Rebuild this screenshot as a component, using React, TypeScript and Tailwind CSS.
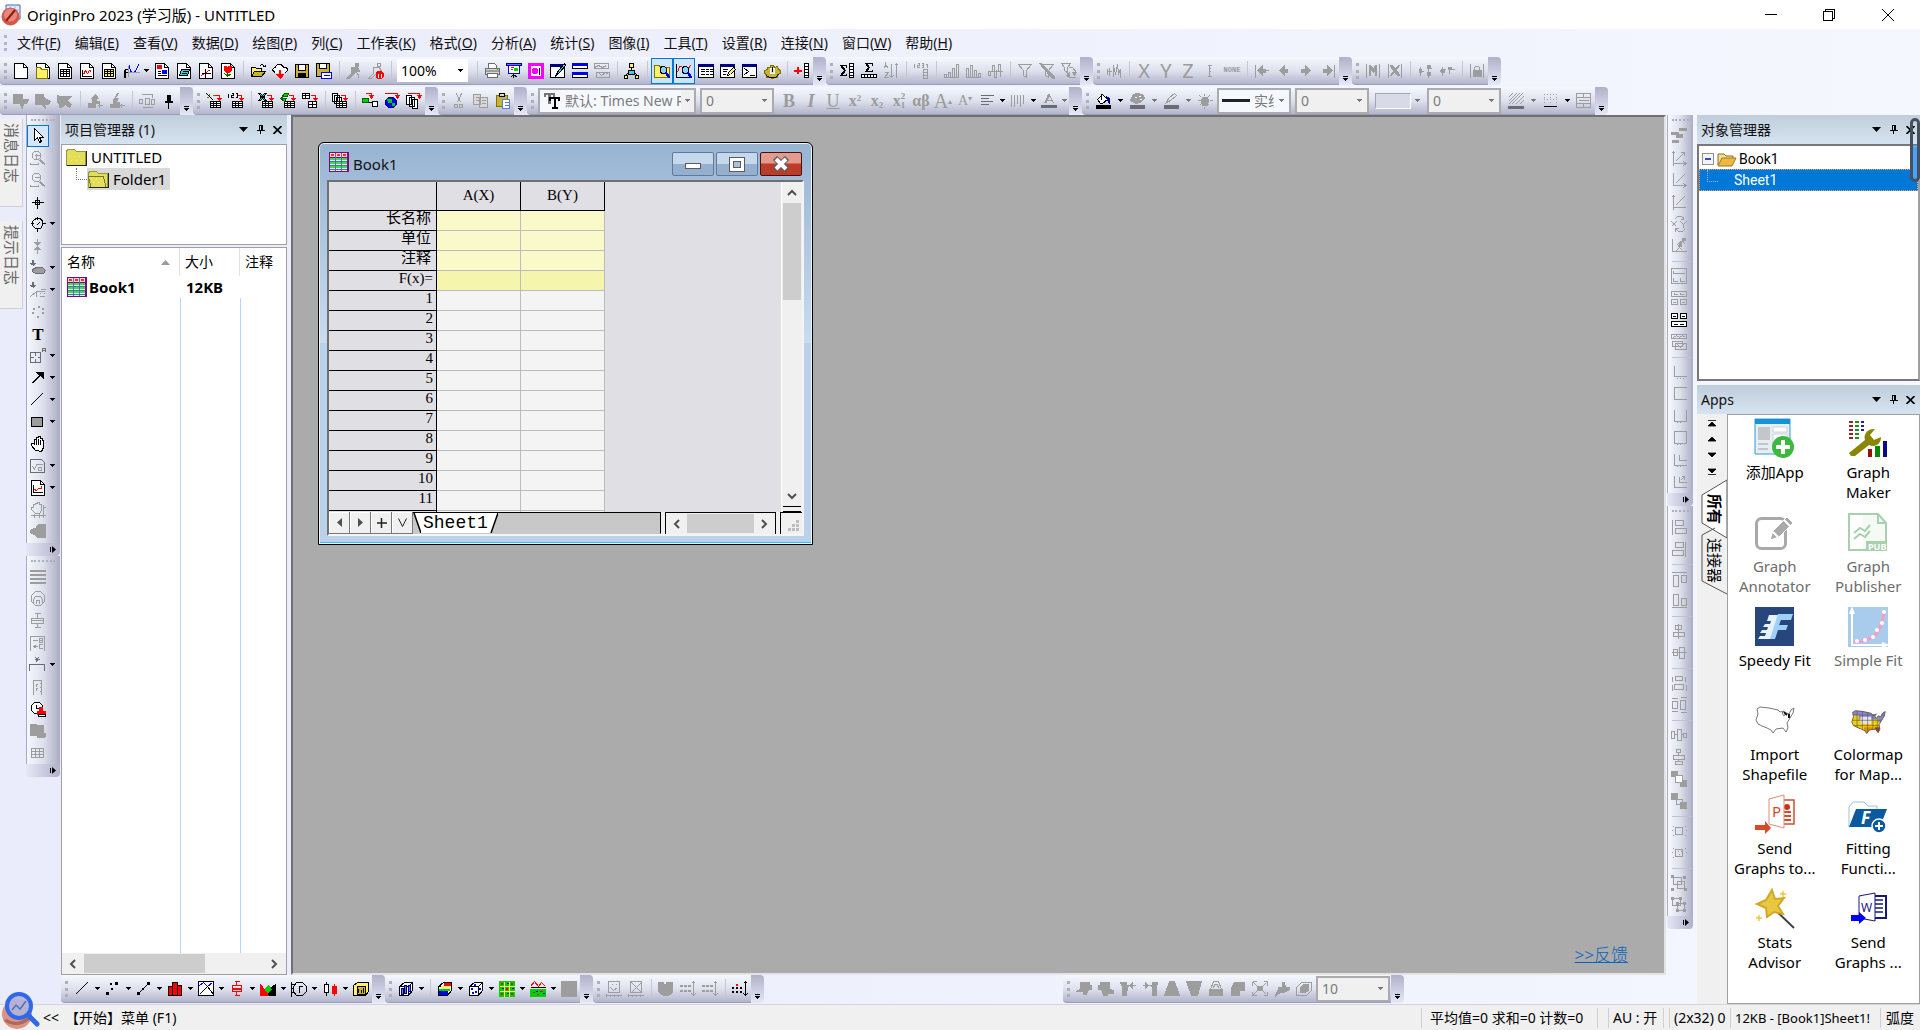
import React from "react";

const SANS = "font-['Noto_Sans','Noto_Sans_CJK_SC',sans-serif]";
const SERIF = "font-['Liberation_Serif','Noto_Sans_CJK_SC',serif]";

/* Icon notation: "stroke/fill path" segments joined with "|" on a 16px grid */
const INK: Record<string, string> = {
  "-": "none", k: "#000000", w: "#ffffff", g: "#9d9d9d", d: "#6b6b73", r: "#ff0000", b: "#0000f0",
  n: "#00007f", y: "#fff06a", Y: "#7a7400", o: "#c8b432", G: "#00d000", D: "#005f00", c: "#40d0d8",
  m: "#ff00ff", l: "#d8d8d8", s: "#5b7fd0", e: "#8fd0ff",
};

const Icon = ({ a, size = 16 }: { a: string; size?: number }) => (
  <svg width={size} height={size} viewBox="0 0 16 16" shapeRendering="crispEdges" className="shrink-0 overflow-visible" aria-hidden="true">
    <g transform="translate(.5 .5)">
      {a.split("|").map((seg, i) => {
        const at = seg.indexOf(" ");
        const [s, f] = seg.slice(0, at).split("/");
        return <path key={i} d={seg.slice(at + 1)} stroke={INK[s]} fill={INK[f]} />;
      })}
    </g>
  </svg>
);

const DOC = "k/w M1 0h9l4 4v11h-13z|k/- M10 0v4h4";
const GRID = "k/w M3 6h9v7h-9zM3 8h9M3 10h9M6 6v7M9 6v7";
const SHEET = "k/w M4 8h10v6h-10zM4 10h10M4 12h10M7 8v6M10 8v6";
const RARROW = "r/- M8 2h5v4|r/r M11 5h4l-2 2z";
const LENS = "|k/e M6 5l1-2h3l2 2v3l-2 2h-3l-1-2z|b/b M11 9h1l3 4v1h-1l-3-4z";

type Item = "|" | [string, string | React.ReactNode, string?];

const Caret = ({ grey }: { grey?: boolean }) => (
  <svg width="7" height="4" viewBox="0 0 7 4" className="shrink-0" shapeRendering="crispEdges" aria-hidden="true">
    <path d="M1 0h5L3.500 3z" fill={grey ? "#777" : "#000"} />
  </svg>
);

const Tools = ({ items, wide }: { items: Item[]; wide?: boolean }) => (
  <>
    {items.map((it, i) =>
      it === "|" ? (
        <span key={i} className="flex w-2 justify-center"><span className="h-5 w-px bg-[#c4c6d0]" /></span>
      ) : (
        <span key={i} className="flex items-center">
          <button
            type="button"
            aria-label={it[0]}
            className={it[2] === "s"
              ? "flex h-[26px] w-[22px] items-center justify-center border border-[#0078d7] bg-[#cce4f7]"
              : "flex h-[26px] w-[22px] items-center justify-center"}
          >
            {typeof it[1] === "string" ? <Icon a={it[1]} /> : it[1]}
          </button>
          {(it[2] === "v" || it[2] === "g") && (
            <button type="button" aria-label={it[0] + " 选项"} className={wide ? "flex h-6 w-3 items-center justify-center" : "flex h-6 w-[9px] items-center justify-center"}>
              <Caret grey={it[2] === "g"} />
            </button>
          )}
        </span>
      )
    )}
  </>
);

const Bar = ({ children }: { children: React.ReactNode }) => (
  <div className="flex h-7 shrink-0 items-stretch">
    <div className="flex items-center rounded-bl border-b border-[#9b9db8] bg-linear-to-b from-[#f5f8fe] via-[#dfe2ee] to-[#b3b5cc]">
      <span className="flex w-[10px] justify-center"><span className="h-4 w-[3px] border-l-3 border-dotted border-[#adb0ba]" /></span>
      {children}
    </div>
    <button type="button" aria-label="工具栏选项" className="flex w-[13px] flex-col items-center justify-end gap-px rounded-r-sm bg-linear-to-b from-[#b1b2ca] to-[#e6e7f7] pb-[3px]">
      <span className="h-px w-[5px] bg-black" />
      <Caret />
    </button>
  </div>
);

const VBar = ({ items, cls }: { items: Item[]; cls: string }) => (
  <div className={cls}>
    <div className="flex flex-col border-l border-[#a9abc0] bg-linear-to-r from-[#f5f8fe] via-[#dddfeb] to-[#abadc5]">
      <span className="flex h-[10px] items-center pl-1"><span className="w-6 border-t-2 border-dotted border-[#adb0ba]" /></span>
      {items.map((it, i) =>
        it === "|" ? (
          <span key={i} className="flex h-2 items-center pl-1"><span className="h-px w-5 bg-[#c0c2cc]" /></span>
        ) : (
          <span key={i} className="flex items-center">
            <button
              type="button"
              aria-label={it[0]}
              className={it[2] === "s"
                ? "flex h-[22px] w-[22px] items-center justify-center border border-[#0078d7] bg-[#d3e7f8]"
                : "flex h-[22px] w-[22px] items-center justify-center"}
            >
              {typeof it[1] === "string" ? <Icon a={it[1]} /> : it[1]}
            </button>
            {it[2] === "v" && (
              <button type="button" aria-label={it[0] + " 选项"} className="flex h-5 w-[7px] items-center justify-center"><Caret /></button>
            )}
          </span>
        )
      )}
    </div>
    <button type="button" aria-label="工具栏选项" className="flex h-[13px] items-center justify-end gap-px rounded-b bg-linear-to-r from-[#e6e7f7] to-[#b1b2ca] pr-1">
      <span className="h-[5px] w-px bg-black" />
      <svg width="4" height="7" viewBox="0 0 4 7" aria-hidden="true"><path d="M0 0v7l4-3.500z" /></svg>
    </button>
  </div>
);

const Combo = ({ label, value, cls, sel }: { label: string; value: string; cls: string; sel: string }) => (
  <span className={cls}>
    <select aria-label={label} className={sel}><option>{value}</option></select>
    <span className="pointer-events-none flex w-4 shrink-0 items-center justify-center"><Caret grey={label !== "缩放"} /></span>
  </span>
);
const GREYBOX = "flex h-[26px] border-2 border-[#a9abae] bg-[#f0f0f0] text-[#7b7b7b]";
const SEL = "w-0 flex-1 appearance-none truncate pl-1 text-sm leading-5 outline-none";

const Glyph = ({ children, cls = "" }: { children: React.ReactNode; cls?: string }) => (
  <span className={"font-['Liberation_Serif',serif] leading-none text-[#9b9b9b] " + cls}>{children}</span>
);

const std1: Item[] = [
  ["新建项目", DOC],
  ["新建文件夹", DOC + "|Y/y M1 6v-2h4l1 2h6v9h-11z"],
  ["新建工作簿", DOC + "|" + GRID],
  ["新建图", DOC + "|r/- M4 11l2-4l2 3l2-3l2 1|k/- M3 6v7h9"],
  ["新建矩阵", DOC + "|k/y M3 6h9v7h-9zM3 8h9M3 10h9M6 6v7M9 6v7"],
  ["新建函数图", "b/- M6 2c1 10 5 10 9-1|g/- M5 9h11M5 2v11|k/- M4 6h-2v8h-2M0 9h4M1 6v8", "v"],
  ["新建布局", DOC + "|r/r M3 2h4v3h-4z|b/b M8 7h4v3h-4z|k/- M3 8h3M3 10h3M3 12h9"],
  ["新建备注", DOC + "|k/c M5 6h8l-2 6h-8zM6 8h5M5 10h5"],
  ["新建图形窗口", DOC + "|r/- M3 12l9-6|k/- M7 5v9M3 10h9"],
  ["新建图像", DOC + "|r/r M4 3h2l1 2l1-2h3v4l-2 2h-3l-2-2z|D/G M7 9v4M4 10l3 3l4-3"],
  "|",
  ["打开", "k/y M1 13v-9h4l1 1h5v3|k/o M1 13l3-5h11l-4 5z|k/- M9 3c2-3 4-2 5 0M12 3h3v-2"],
  ["云端打开", "k/w M3 9c-4-1-3-5 0-5c1-4 7-4 8 0c5-1 5 5 1 5|r/r M7 7h1v7h-1zM4 11h7l-3 4z"],
  ["保存", "k/o M1 1h13v13h-13z|k/w M4 1h7v6h-7z|k/k M4 10h7v4h-7z"],
  ["保存模板", "k/o M0 0h13v13h-13z|k/w M3 0h7v5h-7z|b/w M5 9h10v6h-10z|b/- M7 12h6"],
  "|",
  ["运行", "g/g M9 0h3v3h-3zM5 4h6l2 4h-3l-3 3l-4 4h-3l5-5zM9 8l3 3v3"],
  ["热键运行", "g/- M9 0h3v3h-3zM5 4h6l2 4h-3l-3 3l-4 4h-3l5-5z|r/r M9 8h4l2 2v3l-2 2h-4l-1-2v-3z|w/- M10 10v4M13 10v4"],
  "|",
];
const std2: Item[] = [
  "|",
  ["打印", "d/w M4 5v-5h6l2 2v3|d/l M1 5h14v6h-14z|g/g M2 7h12v1h-12z|d/w M3 10h10v4h-10z|G/G M12 6h1v0h-1z"],
  ["幻灯片", "n/s M0 0h15v2h-15z|b/w M2 2h11v8h-11z|k/- M7 10v4M4 14l3-3l4 3|r/- M4 4h3M4 6h2|G/G M8 5h3v2h-3z"],
  ["视频", "m/m M0 0h15v15h-15z|w/w M3 3h9v9h-9z|m/m M5 5h3l1 1v3l-1 1h-3l-1-1v-3z|n/- M11 4v7"],
  ["绘图", "k/w M0 1h14v13h-14z|n/n M0 1h14v2h-14z|k/c M5 13l3-6l6-7l1 2l-6 7z"],
  ["拆分窗口", "k/w M0 0h15v5h-15zM0 9h15v5h-15z|b/b M0 0h15v2h-15zM0 9h15v2h-15z"],
  ["复制窗口", "g/- M0 0h14v5h-14zM2 9h13v5h-13zM0 4l4-2l4 2l4-2M4 9l3 3l4-3l3 2"],
  "|",
  ["层次结构", "k/y M5 0h4v4h-4z|k/c M4 7h6v4h-6z|k/y M0 12h3v3h-3zM11 12h3v3h-3z|k/- M7 4v3M4 9l-3 3M10 9l3 3"],
  "|",
  ["项目管理器", "Y/y M0 2h5l1 2h9v10h-15z" + LENS, "s"],
  ["结果日志", "k/- M0 0v14h15|r/- M1 9c2-8 4-8 6-2s4-2 7-5" + LENS, "s"],
  ["表格", "k/w M0 1h15v13h-15z|n/n M0 1h15v2h-15z|k/- M2 6h4M7 6h3M11 6h3M2 8h4M7 8h3M11 8h3M2 11h4M7 11h3M11 11h3"],
  ["备注", "k/w M0 1h14v13h-14z|n/n M0 1h14v2h-14z|k/- M2 6h5M2 8h4M2 11h3|k/y M7 12l1-3l5-5l2 2l-5 5z"],
  ["命令", "k/w M0 1h14v13h-14z|n/n M0 1h14v2h-14z|k/- M2 5l4 3l-4 3M7 12h5"],
  ["设置", "Y/o M6 2h3l1 2l3-1l1 3l2 1v3l-3 1v3h-3l-2 1l-3-1h-3v-3l-2-1v-3l3-1v-2h3z|k/- M2 12l3 2h6l3-3|w/l M6 5h4v5h-4z|k/- M8 3v5"],
  "|",
  ["添加列", "r/r M3 4h1v6h-1zM0 7h7v1h-7z|k/w M10 0h4v14h-4zM10 3h4M10 6h4M10 9h4M10 12h4"],
];
const col: Item[] = [
  ["列统计", "k/- M7 4v-2h-6l4 5l-4 5h6v-2M2 2l4 5l-4 5|k/w M10 0h4v14h-4zM10 3h4M10 6h4M10 9h4M10 12h4"],
  ["行统计", "k/- M11 2v-2h-7l3 4l-3 4h7v-2M5 0l3 4l-3 4|k/w M0 11h15v3h-15zM3 11v3M6 11v3M9 11v3M12 11v3"],
  ["排序", "g/- M1 5l1-5l2 5M1 3h3M1 9h4l-4 5h4M8 0v14M6 12l2 2l2-2M13 0v14M11 2l2-2l2 2"],
  "|",
  ["设置列值", "g/- M1 0v4M4 0h2v2h-2v2h2M8 0h2v4h-2M8 2h2M12 1h2v3M10 6h4v9h-4zM10 9h4M10 12h4"],
  "|",
  ["柱状1", "g/- M0 14h15M1 14v-3h2v3M5 14v-5h2v5M9 14v-9h2v9M13 14v-13h2v13"],
  ["柱状2", "g/- M0 14h15M1 14v-9h2v9M5 14v-12h2v12M9 14v-7h2v7M13 14v-4h2v4"],
  ["柱状3", "g/- M0 8h15M1 8v4h2v-4M5 8v-6h2v12h2v-8M11 8v-7h2v12"],
  "|",
  ["筛选", "g/- M1 1h13l-5 6v7l-3-2v-5z"],
  ["清除筛选", "g/- M1 1h13l-5 6v7l-3-2v-5z|g/g M0 0h2l13 13v2h-2z"],
  ["重新筛选", "g/- M0 0h9l-3 4v5l-3-2v-3zM7 4h4l4 5M5 9l3 5h6|g/g M11 9h4l-2 3zM5 12l3-3v5z"],
];
const axis: Item[] = [
  ["忽略", "g/- M0 8h5M1 5v6M3 4v8M7 13v-11l2 9l2-10l1 9l2-4v8"],
  "|",
  ["X", <Glyph key="x" cls="text-[20px] font-['Noto_Sans']">X</Glyph>],
  ["Y", <Glyph key="y" cls="text-[20px] font-['Noto_Sans']">Y</Glyph>],
  ["Z", <Glyph key="z" cls="text-[20px] font-['Noto_Sans']">Z</Glyph>],
  ["误差", "g/- M5 2h4M5 13h4M7 2v11M6 5h2M6 8h2"],
  ["无", <span key="n" className="font-['Liberation_Mono',monospace] text-[7px] font-bold text-[#9b9b9b]">NONE</span>],
  "|",
  ["首列", "g/- M1 1v13M5 7h9|g/g M3 7l5-5v10zM8 6h3v3h-3z"],
  ["左移", "g/g M3 7l5-5v10zM8 6h3v3h-3z"],
  ["右移", "g/g M12 7l-5-5v10zM3 6h4v3h-4z"],
  ["末列", "g/- M14 1v13|g/g M12 7l-5-5v10zM3 6h4v3h-4z"],
];
const mask: Item[] = [
  ["屏蔽", "g/- M1 0v14M14 0v14|g/g M4 12v-10h1l3 4l2-4h1v10h-1v-6l-2 3l-3-3v6z"],
  ["取消屏蔽", "g/- M1 0v14M14 0v14|g/g M3 2h2l7 9v1h-2l-7-9zM11 2h1l-8 10h-1z"],
  "|",
  ["交换", "g/- M3 3v9M1 8h5M11 1v13M9 5h5|g/g M2 6h2v3h-2zM10 2h3v2h-3zM10 9h3v3h-3z"],
  ["移动", "g/- M3 3v9M0 9l2-3h4M8 6h7M10 3v7|g/g M2 7h3v2h-3zM9 4h3v2h-3z"],
  "|",
  ["锁定", "g/- M1 0v14M14 0v14M5 7v-3l1-1h3l1 1v3|g/g M4 7h8v6h-8z"],
];

const edit: Item[] = [
  ["后退", "g/g M0 1h9v5h6l-2 4h-3l-1 5l-3-5h-6z"],
  ["前进", "g/g M0 1h8v3l7 4l-2 3h-4l1 4l-4-4h-6z"],
  ["删除", "g/g M0 2l3 1h11l-4 4l4 4l-2 3l-4-3l-4 3h-2v-4l-2-1z"],
  "|",
  ["添加层", "g/g M4 5l4-4l3 4h-2v3h3v2h-4v4h-7v-4h4v-5zM12 10v4M10 12h5"],
  ["更新", "g/g M9 0l-4 5h4l-3 4h4v5h-9v-3h3v-4l4-7zM12 10v4M10 12h5"],
  "|",
  ["重排", "g/- M2 1h11v3M13 14h-10M0 6h3v4h-3zM6 5h4v6h-4zM12 6h3v5h-3z"],
  ["锁定", "k/k M6 2h3v6h-3zM4 8h7v1h-7zM7 9v6"],
];
const imp: Item[] = [
  ["导入向导", SHEET + "|" + RARROW + "|k/y M0 0l7 7|Y/- M3 0v2M0 4h2M6 2h2"],
  ["导入ASCII", SHEET + "|" + RARROW + "|k/- M0 0v4M3 0h2v2h-2v2h2M7 0h2v4h-2"],
  "|",
  ["导入Excel", SHEET + "|" + RARROW + "|k/c M0 0h2l6 7h-2zM6 0h2l-6 7h-2z"],
  ["重新导入", SHEET + "|" + RARROW + "|D/G M1 4l3-4h4l-1 3h-3zM0 5h6l-2 3z"],
  ["导入表", "k/w M0 0h7v5h-7zM0 2h7M3 0v5M6 8h8v6h-8zM6 11h8M10 8v6|" + RARROW],
  "|",
  ["导入多个", "k/w M0 0h5v8h-5zM2 2h5v8h-5zM4 4h5v8h-5z|" + SHEET + "|" + RARROW],
  "|",
  ["连接数据", "D/G M0 5h6v4h-6z|k/- M6 9h4|k/w M10 8h5v5h-5z|r/- M3 0h6v3|r/r M7 2h4l-2 3z"],
  ["连接网页", "n/b M4 4h5l3 3v4l-3 3h-5l-3-3v-4z|G/G M3 6h4v3h-3zM8 10h2v2h-2z|r/- M0 0h13v2|r/r M11 2h4l-2 3z"],
  ["克隆连接", "k/w M0 2h5v9h-5zM3 4h5v9h-5zM6 6h5v9h-5z|r/- M1 0h12v2|r/r M11 2h4l-2 3z"],
];
const clip: Item[] = [
  ["剪切", "g/- M5 0l4 9M10 0l-4 9M3 11h3v3h-3zM8 11h3v3h-3z"],
  ["复制", "g/l M0 1h7v10h-7zM6 4h8v10h-8zM2 4h3M2 7h3M8 7h4M8 10h4"],
  ["粘贴", "Y/o M1 2h11v11h-11z|k/l M4 0h5v3h-5z|s/w M7 6h7v9h-7z|s/- M9 9h4M9 12h4"],
];
const fmt: Item[] = [
  ["加粗", <Glyph key="b" cls="text-lg font-bold">B</Glyph>],
  ["斜体", <Glyph key="i" cls="text-lg font-bold italic">I</Glyph>],
  ["下划线", <Glyph key="u" cls="text-lg underline">U</Glyph>],
  ["上标", <Glyph key="s" cls="text-base font-bold">x<sup className="text-[9px]">2</sup></Glyph>],
  ["下标", <Glyph key="t" cls="text-base font-bold">x<sub className="text-[9px]">2</sub></Glyph>],
  ["上下标", (
    <Glyph key="v" cls="flex items-center text-base font-bold">x<span className="flex flex-col text-[9px] leading-[9px]"><span>2</span><span>1</span></span></Glyph>
  )],
  ["希腊字母", <Glyph key="w" cls="text-base font-bold">αβ</Glyph>],
  ["增大字号", <Glyph key="y" cls="text-xl">A<sup className="text-[8px]">▴</sup></Glyph>],
  ["减小字号", <Glyph key="z" cls="text-sm">A<sup className="text-[8px]">▾</sup></Glyph>],
  ["对齐", "d/- M1 2h13M1 5h8M1 8h12M1 11h8", "v"],
  ["竖排", "g/- M1 1v12M4 1v12M7 1v9M10 1v12M13 1v9", "v"],
  ["字体颜色", "g/- M3 10l4-9h1l4 9M4 10l4-8M5 7h5|d/d M0 12h15v2h-15z", "g"],
];
const fill: Item[] = [
  ["填充颜色", "k/w M2 6l5-5l5 5l-5 4h-2z|n/n M11 3l3 2v5l-2-3z|k/- M6 0v6|k/k M1 12h14v3h-14z", "v"],
  ["图案颜色", "g/g M3 2l4-2l6 1l2 4l-4 4l-5 1l-5-3z|w/- M5 4h2M9 3h2M10 6h2|d/d M1 12h14v3h-14z", "g"],
  ["线条颜色", "g/- M3 9l2-4l6-5l2 2l-6 5z|d/d M1 12h14v3h-14z", "g"],
  ["发光", "g/g M5 4h5l1 3l-1 5h-5l-1-5z|g/- M7 0v2M7 13v2M0 7h3M12 7h3M2 2l2 2M12 2l-2 2M2 12l2-2M12 12l-2-2"],
];
const borderTools: Item[] = [
  ["图案", "g/- M0 4l4-4M0 8l8-8M0 11l11-11M3 11l11-11M7 11l8-8M11 11l4-4|d/d M0 13h15v2h-15z", "g"],
  ["边框", "g/- M1 1h1M4 1h1M7 1h1M10 1h1M13 1h1M1 6h1M4 6h1M7 6h1M10 6h1M13 6h1M1 4h1M7 4h1M13 4h1M1 9h1M7 9h1M13 9h1|k/- M1 13h13", "v"],
  ["合并单元格", "g/- M0 0h14v14h-14zM0 4h14M0 10h14M7 0v4M7 10v4M2 7h10"],
];

const left1: Item[] = [
  ["指针", "k/w M4 0v12l3-3l2 5l2-1l-2-4h4z", "s"],
  ["放大", "g/- M2 3l2-2h4l2 2v4l-2 2h-4l-2-2zM4 5h5M6 3v5M0 12v2h8v-2|g/g M10 9l4 4v1l-5-4z"],
  ["缩小", "g/- M2 3l2-2h4l2 2v4l-2 2h-4l-2-2zM4 5h5M0 12v2h8v-2|g/g M10 9l4 4v1l-5-4z"],
  ["屏幕读取", "k/- M7 2v12M1 8h12M5 6h4v4h-4z"],
  ["数据读取", "k/- M4 3l2-1h3l2 1l1 2v4l-2 3h-5l-3-3v-4zM7 0v3M7 12v3M0 7h3M12 7h3M7 7h1M6 8h1M8 6h1", "v"],
  ["数据选择", "g/- M7 0v4M7 11v4|g/g M4 4h6l-3 3zM4 11h6l-3-3z"],
  ["选择数据点", "d/d M2 0h1v3h2l-2 2l-3-2h2z|d/g M2 9l4-2h6l3 3l-2 3h-8l-3-2z", "v"],
  ["屏蔽数据点", "d/d M2 0h1v3h2l-2 2l-3-2h2z|g/- M0 14l6-5h8M6 14v-6M10 7h5M9 11h1M13 11h1M9 14h5", "v"],
  ["绘制数据", "g/g M3 4h1v1h-1zM8 2h1v1h-1zM12 4h1v1h-1zM2 8h1v1h-1zM12 8h1v1h-1zM7 12h1v1h-1z"],
  ["文本工具", <span key="t" className="font-['Liberation_Serif',serif] text-[17px] leading-none font-bold">T</span>],
  ["注释", "d/- M0 4h10v10h-10zM5 4v3M5 10v4M0 9h3M7 9h3M12 3v-3h3v3M12 2h3", "v"],
  ["箭头工具", "k/- M1 13l9-9M2 13l9-9|k/k M6 2h7v6l-3-3z", "v"],
  ["直线工具", "k/- M0 13l12-12", "v"],
  ["矩形工具", "k/g M1 3h11v9h-11z", "v"],
  ["平移", "k/w M5 14l-4-5v-2h2l1 1v-5h2v-2h2v-1h2v2h2v2h1v7l-2 4z|k/- M6 3v5M8 2v6M10 3v5"],
  ["公式", "d/- M0 1h11l3 3v10h-14z|g/- M2 8l2 3l2-5h6M8 9h3v3h-3z", "v"],
  ["插入图", DOC + "|r/- M4 9l2 1l2-2h3v-3|k/- M3 4v8h9", "v"],
  ["缩放平移", "g/- M5 11l-4-4v-2h2v-3h2v-1h2v-1h2v2h2v6l-2 3zM0 13h15M13 2v13M4 11v4M9 11v4M12 5h3"],
  ["标签", "g/g M5 3l3-3h7v13h-8l-3-3l-4-2v-2z"],
];
const left2: Item[] = [
  ["图层", "g/g M0 1h15v1h-15zM0 5h15v1h-15zM0 9h15v1h-15zM0 13h15v1h-15z"],
  ["同心圆", "g/- M5 0h5l4 4v6l-4 4h-5l-4-4v-6zM5 5h5l2 3v4M5 5l-2 3v4M6 12v-3h3v3"],
  ["箱线", "g/- M4 0h6M7 0v5M1 5h12v5h-12zM1 7h12M7 10v4M4 14h6"],
  ["图例", "g/- M0 15v-14h14v14M2 5h5M2 11h5M9 3h3v4h-3zM9 5h3M12 9h-3v4h3|g/g M4 10h1v2h-1z"],
  ["括号", "d/- M-1 13v-6h15v6M4 2h5M6 0v4M5 0l3 4M8 0l-3 4", "v"],
  ["色标", "g/- M3 15v-14h8v14M5 5h2M5 9h2M9 4h2M9 8h2M9 12h2M6 4v3M6 8v3"],
  ["时间戳", "k/w M4 1h5l3 3v5l-3 3h-5l-3-3v-5z|k/- M6 3v4h2|r/r M9 6h3v4h3v3h-8v-3h2z|k/w M8 13h7v2h-7z"],
  ["文件夹戳", "g/g M0 1h6l1 1h6v8h2v3h-8v-1h-7z|g/w M7 13h7v1h-7z"],
  ["表", "g/- M1 3h12v9h-12zM1 6h12M1 9h12M5 3v9M9 3v9"],
];
const right1: Item[] = [
  ["图层管理", "g/g M8 0h7v2h-7zM0 4h7v2h-7zM5 6h6v3h-6zM1 12h6v2h-6z"],
  ["X-Y轴", "g/- M2 15v-14M0 3l2-2l2 2M2 13h13M12 11l3 2l-3 2M4 11l8-8M9 2h4v3"],
  ["轴2", "g/- M2 0v13h13M12 11l3 2l-3 2M4 11l9-9"],
  ["轴3", "g/- M2 15v-14M0 3l2-2l2 2M2 13h12M4 11l9-9"],
  ["交换XY", "g/- M0 5l5 5M5 5l-5 5M9 5l3 3l3-3M12 8v3M3 3l3-3h4l2 2M4 12l3 3h4l2-2M12 0v3h-3M4 15v-3h3"],
  ["快速", "g/- M1 0v13h14M4 13l4-4l-2-3l3-3h3l1 3M8 9l3 3|g/g M11 0h3v2h-3zM8 4h2v4h-2z"],
  "|",
  ["布局1", "g/- M0 0h15v15h-15zM2 2v3h11M2 9v4h4M9 9v4h4"],
  ["布局2", "g/- M0 1h15v5h-15zM0 9h6v5h-6zM9 9h6v5h-6zM3 2v2h3M9 2v2h3M2 11v1h2M11 11v1h2"],
  ["布局3", "k/w M0 1h6v5h-6zM9 1h6v5h-6zM0 9h15v5h-15z|k/- M2 3v1h2M11 3v1h2M3 11v1h3M9 11v1h3"],
  ["布局4", "g/- M0 0h15v4h-15zM2 3l3-2l3 2l3-2l3 2M1 7h10v5h-10zM4 9h11v6h-11zM6 10l3 3l3-3"],
  "|",
  ["框1", "g/- M3 1v11h12|g/- M2 3h1M2 6h1M2 9h1M6 13v1M9 13v1M12 13v1"],
  ["框2", "g/- M15 1h-12v12h12M2 3h1M2 6h1M2 9h1M6 0v1M9 0v1M12 0v1"],
  ["框3", "g/- M3 1v12h12v-12M2 3h1M2 6h1M2 9h1M6 13v1M9 13v1"],
  ["框4", "g/- M3 1h12v12h-12zM2 3h1M2 6h1M2 9h1M6 13v1M9 13v1"],
  ["框5", "g/- M3 1v12h12M8 2v6h7M2 3h1M2 6h1M2 9h1M6 13v1M9 13v1"],
  ["框6", "g/- M3 1v12h12M8 2v6h7M9 6l4-4M10 2h3v3M2 3h1M2 6h1M2 9h1"],
];
const right2: Item[] = [
  ["左对齐", "g/- M1 0v15M4 1h8v5h-8zM4 9h11v5h-11z"],
  ["右对齐", "g/- M14 0v15M4 1h8v5h-8zM1 9h11v5h-11z"],
  "|",
  ["顶对齐", "g/- M0 1h15M2 4h5v11h-5zM10 4h5v7h-5z"],
  ["底对齐", "g/- M0 14h15M2 1h5v11h-5zM10 5h5v7h-5z"],
  "|",
  ["水平居中", "g/- M7 0v15M4 2h6v4h-6zM2 9h11v4h-11z"],
  ["垂直居中", "g/- M0 7h15M2 4h4v6h-4zM8 2h5v11h-5z"],
  "|",
  ["等宽", "g/- M4 1h7v4h-7zM3 9h9v5h-9zM1 1v5M14 1v5M1 9v6M15 9v6"],
  ["等高", "g/- M1 4h5v7h-5zM9 3h5v9h-5zM0 1h6M9 0h6M0 14h6M9 15h6"],
  "|",
  ["水平分布", "g/- M0 4h3v7h-3zM6 2h4v11h-4zM12 6h3v4h-3zM3 7h3M10 7h2"],
  ["垂直分布", "g/- M5 0h4v3h-4zM2 6h11v4h-11zM4 12h7v3h-7zM7 3v3M7 10v2"],
  ["前置", "g/g M0 0h6v5h-6zM9 9h6v6h-6z|g/w M4 4h7v7h-7z"],
  ["后置", "g/- M5 6h6v5h-6z|g/g M0 0h6v6h-6zM9 9h6v6h-6z"],
  "|",
  ["组合", "g/- M4 4h7v7h-7zM1 3h1M0 7h1M1 12h1M13 3h1M14 7h1M13 12h1"],
  ["取消组合", "g/- M4 4h7v7h-7zM6 6h1M9 6h1M7 9h1M1 3h1M0 7h1M1 12h1M13 3h1M14 7h1"],
  "|",
  ["编组", "g/- M2 2h8v7h-8zM6 6h7v7h-7z|g/g M0 0h2v2h-2zM12 1h2v2h-2zM0 13h2v2h-2zM13 13h2v2h-2z"],
  ["解组", "g/- M1 1h8v7h-8zM6 6h7v7h-7z|g/g M0 0h2v2h-2zM8 0h2v2h-2zM5 5h2v2h-2zM12 5h2v2h-2zM5 12h2v2h-2zM12 12h2v2h-2z"],
];

const CUBE = "k/w M1 5l5-4h8v8l-4 5h-9z|k/- M1 5h9v9M10 5l4-4";
const plot1: Item[] = [
  ["折线图", "k/- M1 13l12-12", "v"],
  ["散点图", "k/k M1 11h2v2h-2zM6 7h1v1h-1zM5 2h1v1h-1zM10 1h2v2h-2z", "v"],
  ["点线图", "k/- M2 12l10-10|k/k M1 11h2v2h-2zM6 7h1v1h-1zM11 1h2v2h-2z", "v"],
  ["柱状图", "k/r M1 5h4v9h-4zM5 1h5v13h-5zM10 4h4v10h-4z", "v"],
  ["多面板图", "k/w M0 0h15v14h-15z|b/- M1 4l4-3l4 4l5-4|k/- M1 13l8-8l6 8", "v"],
  ["箱线图", "r/- M5 0h5M7 0v4M3 4h9v6h-9zM3 7h9M3 8h9M7 10v4M5 14h5", "v"],
  ["面积图", "k/k M0 14h15v-11l-6 5z|G/G M4 9l4-5l3 4l-4 4z|r/r M0 3l8 11h-8z", "v"],
  ["极坐标图", "k/- M0 0v15M5 1h6l4 4v5l-4 4h-6l-3-4v-5zM8 11v-6h3M0 3h2M0 7h2M0 11h2", "v"],
  ["股票图", "k/w M2 3h4v8h-4z|k/- M4 0v3M4 11v3|r/r M10 5h4v7h-4zM12 2v12", "v"],
  ["三维柱", "k/y M0 4l4-3h11v9l-3 4h-12z|k/o M4 5h8v8h-8z|k/- M5 11v-4M8 11v-3M10 11v-5"],
];
const plot2: Item[] = [
  ["三维图", CUBE + "|n/s M3 7h2v6h-2zM6 4h2v8h-2zM10 4h2v6h-2z", "v"],
  "|",
  ["曲面图", CUBE + "|b/b M2 10h8v3h-8z|G/G M2 8h10v1h-10z|y/y M4 5h8v2h-8z|r/r M7 2h6v2h-6z", "v"],
  ["三维散点", CUBE + "|b/b M3 7h1v1h-1zM7 10h1v1h-1zM6 3h1v1h-1zM11 7h1v1h-1zM4 11h1v1h-1z", "v"],
  ["等高线图", "G/G M0 0h15v15h-15z|y/- M0 5h15M0 10h15M5 0v15M10 0v15|r/r M2 2h1v1h-1zM12 2h1v1h-1zM7 7h1v1h-1zM2 12h1v1h-1zM12 12h1v1h-1z|b/- M7 2h2M2 7h2M12 7h2M7 12h2", "v"],
  ["剖面图", "r/- M0 5l4-5l4 5l3-4l4 4|k/- M0 6h15|G/G M0 8h15v7h-15z|r/- M2 11h2M9 10h3M6 13h2|b/- M5 10h2M12 12h2", "v"],
  ["模板库", "g/g M0 0h15v15h-15z"],
];
const plot3: Item[] = [
  ["移动点", "g/- M2 0h11v11h-11zM5 3h1M9 3h1M4 6l3 3l4-3M0 12v3M4 13v2M8 13v2M12 13v2M0 14h15"],
  ["移除点", "g/- M2 0h11v11h-11zM3 1l10 10M13 1l-10 10M0 12v3M4 13v2M8 13v2M12 13v2M0 14h15"],
  "|",
  ["批量1", "g/g M0 1h5v2h3v-2h6v10l-4 3h-5l-5-4z"],
  ["批量2", "g/- M13 0v14M11 2l2-2l2 2M11 12l2 2l2-2|g/g M0 4h2v1h-2zM4 4h2v1h-2zM8 4h2v1h-2zM0 9h2v1h-2zM4 9h2v1h-2zM8 9h2v1h-2z"],
  ["批量3", "g/- M13 0v14M11 2l2-2l2 2M11 12l2 2l2-2|g/g M0 4h2v1h-2zM4 4h2v1h-2zM8 4h2v1h-2zM0 9h2v1h-2zM4 9h2v1h-2zM8 9h2v1h-2z"],
  "|",
  ["批量4", "k/- M13 0v14M11 2l2-2l2 2M11 12l2 2l2-2|r/r M4 3h1v1h-1z|k/k M0 6h1v1h-1zM4 6h1v1h-1zM8 6h1v1h-1zM0 10h1v1h-1zM4 10h1v1h-1zM8 10h1v1h-1z"],
];
const rot: Item[] = [
  ["逆时针", "g/g M4 1h9v3h2v4h-3l-2 5h-3v-3h-7l3-2h1z"],
  ["顺时针", "g/g M2 1h9v7l4 1v3h-6v2h-4l-2-6h-3v-4h2z"],
  ["左倾", "g/g M0 1h6v3h4l-3 1l-1 9h-4v-9zM9 4l3-3v6zM12 4h3"],
  ["右倾", "g/g M15 1h-5v3h-3l3 1v9h4v-9zM6 4l-3-3v6zM3 4h-3"],
  ["上倾", "g/g M5 0h5l5 14h-15z"],
  ["下倾", "g/g M0 0h15l-4 14h-6z"],
  ["增大透视", "g/- M2 8l3-8h5l3 8M5 7l1-4h3l1 4|g/g M1 8h13v6h-13z"],
  ["减小透视", "g/g M4 1h10v8h-5v5h-8v-8z"],
  ["适应框架", "g/- M0 0h4M0 0v4M15 0h-4M15 0v4M0 14h4M0 14v-4M15 14h-4M15 14v-4M1 1l13 12M14 1l-13 12|g/g M5 5h5v4h-5z"],
  ["重置", "g/g M8 1h2v3h1v2h4v2l-5 3h-3l-3 1l-3 3l1-4l2-3v-2h4z"],
  ["三维", "g/- M0 6l5-5h10v8l-5 5h-10z|g/g M4 6l3-3h5v6l-3 2h-5z"],
];

const PanelHead = ({ title }: { title: string }) => (
  <div className="flex h-[29px] shrink-0 items-center bg-linear-to-b from-[#c0cedb] to-[#d6e3f0] pr-px pl-1">
    <h2 className="flex-1 text-[14px] leading-5 text-[#111]">{title}</h2>
    <button type="button" aria-label="菜单" className="flex h-5 w-[17px] items-center justify-center"><svg width="9" height="5" aria-hidden="true"><path d="M0 0h9L4.500 5z" /></svg></button>
    <button type="button" aria-label="固定" className="flex h-5 w-[17px] items-center justify-center"><svg width="8" height="9" viewBox="0 0 8 9" shapeRendering="crispEdges" aria-hidden="true"><path d="M2 .5h4M2 0v5M5.500 0v5M4.500 0v5M0 5.500h8M3.500 6v3" stroke="#000" fill="none" /></svg></button>
    <button type="button" aria-label="关闭" className="flex h-5 w-[17px] items-center justify-center"><svg width="9" height="8" aria-hidden="true"><path d="M.5 0l8 8M8.500 0l-8 8" stroke="#000" strokeWidth="1.600" /></svg></button>
  </div>
);

const Folder = ({ open }: { open?: boolean }) => (
  <svg width="21" height="17" viewBox="0 0 21 17" shapeRendering="crispEdges" className="shrink-0" aria-hidden="true">
    <path d="M.5 1.500l2-1h6l1.500 1.500h9.500v14H.5z" fill="#e2de5c" stroke="#9a9640" />
    <path d="M1 16.500h19.500V2" stroke="#222" fill="none" />
    <path d="M3 7h1M8 7h1M13 7h1M5 11h1M10 11h1M15 11h1" stroke="#ffff40" />
    {open && <path d="M3 16L.5 5.500h15L18 16" fill="none" stroke="#77742c" />}
  </svg>
);

const BookIcon = () => (
  <svg width="20" height="20" viewBox="0 0 20 20" shapeRendering="crispEdges" className="shrink-0" aria-hidden="true">
    <path d="M0 0h20v20H0z" fill="#7a0a7a" />
    <path d="M1 1h17v4H1z" fill="#ffd0d0" />
    <path d="M2 2h3v2H2zM8 2h3v2H8zM14 2h3v2h-3z" fill="#f03030" />
    <path d="M1 6h17v13H1z" fill="#d8f0e0" />
    <path d="M1 6h17v2H1zM1 10h17v2H1zM1 14h17v2H1z" fill="#3fd85a" />
    <path d="M6.500 1v18M12.500 1v18M1 9h17M1 13h17M1 17h17" stroke="#5070a8" />
  </svg>
);

const Chev = ({ d }: { d: string }) => (
  <svg width="10" height="10" viewBox="0 0 10 10" aria-hidden="true"><path d={d} fill="none" stroke="#505050" strokeWidth="2" /></svg>
);
const LEFT = "M7 1L3 5l4 4", RIGHT = "M3 1l4 4-4 4", UP = "M1 7l4-4 4 4", DOWN = "M1 3l4 4 4-4";

const menus: [string, string][] = [
  ["文件", "F"], ["编辑", "E"], ["查看", "V"], ["数据", "D"], ["绘图", "P"], ["列", "C"], ["工作表", "K"], ["格式", "O"],
  ["分析", "A"], ["统计", "S"], ["图像", "I"], ["工具", "T"], ["设置", "R"], ["连接", "N"], ["窗口", "W"], ["帮助", "H"],
];

const USA = "M3 5L4 10 2 16 4 20 8 22 13 24 17 26 19 29 22 25 29 24 32 28 34 24 33 19 36 14 39 9 40 4 37 6 35 10 32 9 30 12 28 9 30 7 26 8 24 6 15 4 6 3z";

const apps: { name: string[]; dim?: boolean; art: React.ReactNode }[] = [
  { name: ["添加App"], art: (<>
    <path d="M0 0h35v35H0z" fill="#e6edf3" stroke="#2e9bd3" /><path d="M0 0h35v5H0z" fill="#1593d2" />
    <path d="M3 8h12v13H3zM3 24h10v2H3zM3 29h10v2H3z" fill="#c3c7cb" /><path d="M18 8h14v5H18zM18 15h14v16H18z" fill="#fff" stroke="#ccd4da" />
    <circle cx="28" cy="28" r="11" fill="#3db83f" /><path d="M28 21v14M21 28h14" stroke="#fff" strokeWidth="4" /></>) },
  { name: ["Graph", "Maker"], art: (<>
    <path d="M1 3h4M1 7h4M1 11h4M1 15h4M1 19h4" stroke="#a02020" strokeWidth="2" /><path d="M7 3h4M7 7h4M7 11h4M7 15h4M7 19h4" stroke="#209020" strokeWidth="2" />
    <path d="M13 3h3M13 7h3M13 11h3" stroke="#2020a0" strokeWidth="2" />
    <path d="M1 34l16-13c-2-6 3-12 10-11l-5 6 4 5 7-3c0 7-6 11-12 8L7 37H3z" fill="#8a8600" />
    <path d="M20 30h4v8h-4z" fill="#9c0c0c" /><path d="M27 27h5v11h-5z" fill="#0a8a0a" /><path d="M35 22h4v16h-4z" fill="#0a0a8a" /></>) },
  { name: ["Graph", "Annotator"], dim: true, art: (<>
    <rect x="1.500" y="5.500" width="29" height="30" rx="5" fill="none" stroke="#a9a9a9" strokeWidth="3" />
    <path d="M15 27l3-9L32 4l6 6-14 14z" fill="#a9a9a9" stroke="#fff" /><path d="M29 7l6 6M18 19l5 5" stroke="#fff" strokeWidth="2" /></>) },
  { name: ["Graph", "Publisher"], dim: true, art: (<>
    <path d="M1 1h20v36H1z" fill="#fff" stroke="#a9cfae" strokeWidth="2" /><path d="M15 1h15l8 9v27H15" fill="#f4faf4" stroke="#a9cfae" strokeWidth="2" />
    <path d="M30 1v9h8" fill="none" stroke="#a9cfae" strokeWidth="2" />
    <path d="M6 20l6-5 5 3 5-6M6 26l6-5 5 3 5-6" stroke="#a9cfae" strokeWidth="2" fill="none" />
    <path d="M18 28h21v10H18z" fill="#a9cfae" /><text x="20" y="37" fontSize="9" fontWeight="bold" fill="#fff">PUB</text></>) },
  { name: ["Speedy Fit"], art: (<>
    <path d="M0 0h39v39H0z" fill="#27477c" /><path d="M14 8h10l-6 24H3l2-3h5l1-3H5l2-3h5l1-3H8l2-3h5l1-3h-4z" fill="#e8f2fb" />
    <path d="M23 7h15l-2 6H26l-2 5h9l-2 5h-8l-3 9h-5z" fill="#9ed0fa" /></>) },
  { name: ["Simple Fit"], dim: true, art: (<>
    <path d="M0 0h40v40H0z" fill="#a9cbec" /><path d="M4 4v34h34M2 7l2-5 2 5M34 36l5 2-5 2" stroke="#fff" strokeWidth="2" fill="none" />
    <path d="M6 35c16-1 26-4 30-29" stroke="#f59ccb" strokeWidth="3" fill="none" />
    {[[9, 34], [17, 33], [25, 30], [29, 23], [34, 16], [36, 5]].map(([x, y]) => <circle key={x} cx={x} cy={y} r="2" fill="#fff" />)}</>) },
  { name: ["Import", "Shapefile"], art: <g transform="translate(-1 3)"><path d={USA} fill="#fff" stroke="#777" /><path d="M30 8l3 3M35 10v4" stroke="#111" strokeWidth="2" /></g> },
  { name: ["Colormap", "for Map..."], art: (<g transform="translate(2 7) scale(.88)">
    <clipPath id="usa"><path d={USA} /></clipPath>
    <g clipPath="url(#usa)"><path d="M0 0h42v30H0z" fill="#f5d000" /><path d="M0 0h42v8H0zM10 8h20v5H10zM32 8h8v8h-8z" fill="#8886d8" /><path d="M12 10h12v8H12z" fill="#e8e4f0" /><path d="M16 22h10v8H16z" fill="#e08a00" /><path d="M28 22h8v8h-8z" fill="#b03820" />
      <path d="M8 2v20M14 2v24M20 3v24M26 5v20M31 5v20M2 8h38M2 14h36M4 20h30" stroke="#555" strokeWidth=".7" /></g>
    <path d={USA} fill="none" stroke="#555" /></g>) },
  { name: ["Send", "Graphs to..."], art: (<>
    <path d="M27 5h12v24H27z" fill="#fff" stroke="#d84a2b" strokeWidth="1.500" /><path d="M29 17h7M29 21h7M29 25h7" stroke="#d84a2b" strokeWidth="2" /><circle cx="32" cy="12" r="3" fill="#c43518" />
    <path d="M14 4l15-4v33l-15-4z" fill="#fff" stroke="#e08a78" /><text x="17" y="22" fontSize="15" fill="#d84a2b">P</text>
    <path d="M0 30h10v-4l6 7-6 6v-4H0z" fill="#d64a28" /></>) },
  { name: ["Fitting", "Functi..."], art: (<>
    <path d="M1 32V12l4-5h11l4 4h9v5" fill="#fff" stroke="#9cc4dc" /><path d="M1 32l7-18h31l-7 18z" fill="#0a5aa0" /><text x="13" y="29" fontSize="17" fontWeight="bold" fontStyle="italic" fill="#fff">F</text>
    <circle cx="31" cy="31" r="7" fill="#0a5aa0" stroke="#fff" strokeWidth="1.500" /><path d="M31 27v8M27 31h8" stroke="#fff" strokeWidth="2" /></>) },
  { name: ["Stats", "Advisor"], art: (<>
    <path d="M17 18l22 21" stroke="#3c4250" strokeWidth="2" /><path d="M17 1l3 9 9-1-6 8 5 8-9-2-7 5-1-9-9-4 9-4z" fill="#e8c840" stroke="#d0a828" strokeWidth="2" />
    <path d="M28 2v6M25 5h6M4 26v6M1 29h6" stroke="#f0c840" strokeWidth="1.500" /></>) },
  { name: ["Send", "Graphs ..."], art: (<>
    <path d="M24 7h14v22H24z" fill="#fff" stroke="#18187c" strokeWidth="2" /><path d="M26 11h9M26 15h9M26 19h9M26 23h9" stroke="#18187c" strokeWidth="1.500" />
    <path d="M11 7l16-3v28l-16-3z" fill="#fff" stroke="#18187c" /><text x="13" y="23" fontSize="12" fill="#18187c">W</text>
    <path d="M3 26h8v-3l7 6-7 6v-3H3z" fill="#0000f8" /></>) },
];

const Cell = ({ c }: { c: string }) => <td className={"border-r border-b border-[#bcbcbc] " + c} />;
const TH = "border-r border-b border-black font-normal";

const BookWindow = () => (
  <section aria-label="Book1" className={"absolute top-[25px] left-[25px] flex h-[403px] w-[495px] flex-col rounded-t-md border border-black bg-linear-to-b from-[#98b4d2] via-[#c9dcf0] to-[#b9d1ea] to-35% px-2 pb-2 shadow-[inset_0_0_0_1px_#e8f6ff,inset_0_-2px_0_#35c0e8] " + SANS}>
    <header className="flex h-[37px] shrink-0 items-center gap-1 pr-[2px] pl-[2px]">
      <BookIcon />
      <h2 className="flex-1 pt-1 text-[15px] leading-5 text-[#111]">Book1</h2>
      <div className="flex gap-[2px] self-end pb-1">
        <button type="button" aria-label="最小化" className="flex h-6 w-[42px] items-center justify-center rounded-xs border border-[#62799b] bg-linear-to-b from-[#c6d8eb] from-50% to-[#95b0ce] to-50%"><span className="mt-1 h-[6px] w-4 border border-[#5a5a64] bg-white" /></button>
        <button type="button" aria-label="最大化" className="flex h-6 w-[42px] items-center justify-center rounded-xs border border-[#62799b] bg-linear-to-b from-[#c6d8eb] from-50% to-[#95b0ce] to-50%"><span className="flex h-[15px] w-4 items-center justify-center border border-[#5a5a64] bg-white"><span className="h-[7px] w-2 border border-[#5a5a64] bg-[#a9c0da]" /></span></button>
        <button type="button" aria-label="关闭" className="flex h-6 w-[42px] items-center justify-center rounded-xs border border-[#4a1010] bg-linear-to-b from-[#e29b8c] from-45% to-[#bb3c28] to-50%"><svg width="18" height="16" aria-hidden="true"><path d="M3 2l12 12M15 2L3 14" stroke="#5a5a64" strokeWidth="6" /><path d="M4 3l10 10M14 3L4 13" stroke="#fff" strokeWidth="4" /></svg></button>
      </div>
    </header>
    <div className="flex min-h-0 flex-1 flex-col border-2 border-t-[#707070] border-r-[#f4f4f4] border-b-[#f4f4f4] border-l-[#707070] bg-[#e0dfe4]">
      <div className="flex min-h-0 flex-1 overflow-hidden">
        <div className={"flex-1 overflow-hidden " + SERIF}>
          <table className="-mt-px w-[276px] table-fixed border-separate border-spacing-0 text-sm">
            <colgroup><col className="w-[108px]" /><col className="w-[84px]" /><col className="w-[84px]" /></colgroup>
            <thead><tr className="h-[30px]"><th className={TH} aria-label="行" /><th className={TH + " text-[15px]"}>A(X)</th><th className={TH + " text-[15px]"}>B(Y)</th></tr></thead>
            <tbody>
              {["长名称", "单位", "注释", "F(x)=", "1", "2", "3", "4", "5", "6", "7", "8", "9", "10", "11", ""].map((r, i) => (
                <tr key={i} className="h-5">
                  <th scope="row" className={TH + " h-5 pt-0 pr-[3px] pb-1 text-right text-[15px] leading-[15px]"}>{i < 3 ? <span className="pr-[2px]">{r}</span> : r}</th>
                  <Cell c={i < 3 ? "bg-[#faf9c9]" : i === 3 ? "bg-[#f6f5ae]" : "bg-[#f4f4f4]"} />
                  <Cell c={i < 3 ? "bg-[#faf9c9]" : i === 3 ? "bg-[#f6f5ae]" : "bg-[#f4f4f4]"} />
                </tr>
              ))}
            </tbody>
          </table>
        </div>
        <div className="flex w-[21px] flex-col border-l border-white bg-[#f0f0f0] px-px">
          <button type="button" aria-label="向上" className="flex h-[21px] shrink-0 items-center justify-center"><Chev d={UP} /></button>
          <div className="h-[97px] bg-[#cdcdcd]" />
          <div className="flex-1" />
          <button type="button" aria-label="向下" className="flex h-[21px] shrink-0 items-center justify-center"><Chev d={DOWN} /></button>
          <div className="h-[6px] border-t border-b border-black" />
        </div>
      </div>
      <div className="flex h-[22px] shrink-0 bg-[#f0f0f0]">
        {["◀", "▶", "+", "v"].map((t, i) => (
          <button key={t} type="button" aria-label={["上一表", "下一表", "添加表", "表列表"][i]} className="flex w-[21px] items-center justify-center border-r border-b border-[#777] shadow-[inset_1px_1px_0_#fff]">
            <svg width="11" height="11" viewBox="0 0 11 11" aria-hidden="true">
              {i < 2 ? <path d={i ? "M3 1v9l5-4.500z" : "M8 1v9L3 5.500z"} fill="#505050" /> : <path d={i === 2 ? "M5.500 1v10M1 6h10" : "M1.500 1.500l4 8 4-8"} stroke="#222" fill="none" strokeWidth={i === 2 ? 1.5 : 1} />}
            </svg>
          </button>
        ))}
        <div className="flex w-[248px] border-y border-r border-black bg-[#c8c8c8] border-b-[#c8c8c8]">
          <svg width="8" height="20" viewBox="0 0 8 20" aria-hidden="true"><path d="M1 0h7v20z" fill="#fff" /><path d="M1 0l7 20" stroke="#000" strokeWidth="1.500" /></svg>
          <button type="button" className="bg-white px-[2px] font-['Liberation_Mono',monospace] text-[18px] leading-5 font-medium">Sheet1</button>
          <svg width="8" height="20" viewBox="0 0 8 20" aria-hidden="true"><path d="M0 0h8L1 20H0z" fill="#fff" /><path d="M8 0L1 20" stroke="#000" strokeWidth="1.500" /></svg>
        </div>
        <div className="ml-1 flex w-[111px] items-center border-x border-t border-black px-px">
          <button type="button" aria-label="向左" className="flex w-5 justify-center"><Chev d={LEFT} /></button>
          <div className="h-[19px] flex-1 bg-[#cdcdcd]" />
          <button type="button" aria-label="向右" className="flex w-5 justify-center"><Chev d={RIGHT} /></button>
        </div>
        <div className="ml-1 flex flex-1 items-end justify-end border-t border-l border-black p-[3px]">
          <svg width="11" height="11" viewBox="0 0 11 11" fill="#bdbdbd" aria-hidden="true"><path d="M8 0h3v3H8zM8 4h3v3H8zM4 4h3v3H4zM8 8h3v3H8zM4 8h3v3H4zM0 8h3v3H0z" /></svg>
        </div>
      </div>
    </div>
  </section>
);

const SideTab = ({ t }: { t: string }) => (
  <button type="button" className="flex h-[88px] w-[23px] items-start border-r border-b border-[#cfcfd4] bg-[#f0f0f0] pt-1 pl-[3px]">
    <span className="text-[15px] leading-[17px] text-[#666] [text-orientation:sideways] [writing-mode:vertical-rl]">{t}</span>
  </button>
);

const VTEXT = "text-[15px] leading-[17px] [text-orientation:sideways] [writing-mode:vertical-rl]";

export default function App() {
  return (
    <div className={"flex h-screen min-h-[760px] flex-col overflow-hidden bg-linear-to-r from-[#eaebfb] to-[#f4f7fe] text-black " + SANS}>
      <header className="flex h-[29px] shrink-0 items-center bg-white pr-[2px] pl-px">
        <svg width="20" height="22" viewBox="0 0 20 22" aria-hidden="true">
          <path d="M5 1h14v14H5z" fill="#e4ecf8" stroke="#3c64b4" /><path d="M9 1v14M14 1v14M5 6h14M5 10h14" stroke="#a8c0e4" />
          <circle cx="9.500" cy="12.500" r="9" fill="#d45848" /><circle cx="9.500" cy="11" r="6.500" fill="#e88878" /><path d="M5 17l9-11" stroke="#8a1818" strokeWidth="2" />
        </svg>
        <h1 className="ml-[6px] flex-1 text-[15px] leading-5">OriginPro 2023 (学习版) - UNTITLED</h1>
        <button type="button" aria-label="最小化" className="flex h-7 w-[58px] items-center justify-center"><svg width="12" height="12" aria-hidden="true"><path d="M0 5.500h12" stroke="#000" /></svg></button>
        <button type="button" aria-label="还原" className="flex h-7 w-[58px] items-center justify-center"><svg width="12" height="12" shapeRendering="crispEdges" aria-hidden="true"><path d="M.5 2.500h9v9h-9zM2.500 2V.5h9V9H10" fill="none" stroke="#000" /></svg></button>
        <button type="button" aria-label="关闭" className="flex h-7 w-[60px] items-center justify-center"><svg width="12" height="12" aria-hidden="true"><path d="M0 0l12 12M12 0L0 12" stroke="#000" /></svg></button>
      </header>

      <nav className="flex h-7 shrink-0 items-center gap-[14px] pl-[4px]">
        <span className="-mr-1 h-4 border-l-3 border-dotted border-[#b4b6c4]" />
        {menus.map(([t, k]) => (
          <button key={t} type="button" className="text-[14px] leading-5 whitespace-nowrap text-[#111]">
            {t}(<u>{k}</u>)
          </button>
        ))}
      </nav>

      <div className="flex shrink-0">
        <Bar>
          <Tools items={std1} />
          <Combo label="缩放" value="100%" cls="mr-[5px] ml-[2px] flex h-[23px] w-[71px] bg-white" sel={SEL} />
          <Tools items={std2} />
        </Bar>
        <Bar><Tools items={col} /></Bar>
        <Bar><Tools items={axis} /></Bar>
        <Bar><Tools items={mask} /></Bar>
      </div>
      <div className="mt-[2px] flex shrink-0">
        <Bar><Tools items={edit} /></Bar>
        <Bar><Tools items={imp} /></Bar>
        <Bar><Tools items={clip} /></Bar>
        <Bar>
          <span className="ml-px flex h-[26px] w-[158px] border-2 border-[#a9abae] bg-[#f5f8fd] pl-1 text-[#7b7b7b]">
            <svg width="17" height="16" className="mt-[3px] shrink-0" aria-hidden="true"><path d="M0 0h11v4H9V2H7v9H4V2H2v2H0z" fill="#777" /><path d="M5 4h11v4h-2V6h-2v8h2v2H8v-2h2V6H7v2H5z" /></svg>
            <select aria-label="字体" className="w-0 flex-1 appearance-none overflow-hidden pl-1 text-[14px] leading-5 outline-none"><option>默认: Times New R</option></select>
            <span className="pointer-events-none flex w-[13px] items-center justify-center bg-[#f0f0f0]"><Caret grey /></span>
          </span>
          <Combo label="字号" value="0" cls={"mr-1 ml-1 w-[74px] " + GREYBOX} sel={SEL} />
          <Tools items={fmt} />
        </Bar>
        <Bar>
          <Tools items={fill} wide />
          <span className="ml-px flex h-[26px] w-[74px] items-center border-2 border-[#a9abae] bg-[#f5f8fd] pl-[3px] text-[#7b7b7b]">
            <span className="h-[3px] w-7 shrink-0 bg-[#222]" />
            <select aria-label="线型" className="w-0 flex-1 appearance-none overflow-hidden pl-1 text-sm leading-5 outline-none"><option>实线</option></select>
            <span className="pointer-events-none flex w-[15px] items-center justify-center"><Caret grey /></span>
          </span>
          <Combo label="线宽" value="0" cls={"ml-1 w-[74px] " + GREYBOX} sel={SEL} />
          <button type="button" aria-label="颜色" className="ml-[6px] h-4 w-9 border border-[#a4a6b8] border-r-white border-b-white bg-[#d8dae8]" />
          <span className="mr-1 flex w-3 justify-center"><Caret grey /></span>
          <Combo label="图案宽度" value="0" cls={"mr-1 w-[74px] " + GREYBOX} sel={SEL} />
          <Tools items={borderTools} wide />
        </Bar>
      </div>

      <main className="flex min-h-0 flex-1">
        <aside className="flex w-[26px] shrink-0 flex-col gap-[14px] pt-1">
          <SideTab t="消息日志" />
          <SideTab t="提示日志" />
        </aside>
        <div className="flex w-[35px] shrink-0 flex-col">
          <VBar items={left1} cls="flex w-[34px] flex-col" />
          <VBar items={left2} cls="flex w-[34px] flex-col" />
        </div>

        <div className="flex min-w-0 flex-1 flex-col">
          <div className="flex min-h-0 flex-1">
            <aside className="flex w-[226px] shrink-0 flex-col">
              <PanelHead title="项目管理器 (1)" />
              <div className="h-[101px] shrink-0 border border-[#a0a0a0] bg-white pt-px pl-1 text-[15px] leading-5">
                <div className="flex h-[22px] items-center gap-1"><Folder />UNTITLED</div>
                <div className="flex h-[22px]">
                  <span className="ml-[10px] h-3 w-[11px] border-b border-l border-dotted border-[#777]" />
                  <span className="flex items-center gap-1 bg-[#d9d9d9] pr-1 pl-px"><Folder open />Folder1</span>
                </div>
              </div>
              <div className="mt-[2px] flex min-h-0 flex-1 flex-col border border-[#a0a0a0] bg-white text-sm leading-5">
                <table className="w-full table-fixed border-separate border-spacing-0 text-left">
                  <colgroup><col className="w-[118px]" /><col className="w-[60px]" /><col /></colgroup>
                  <thead className="text-[14px]">
                    <tr className="h-7">
                      <th className="border-r border-[#e2e2e2] px-[5px] font-normal"><span className="flex items-center justify-between">名称<svg width="9" height="5" className="mr-1" aria-hidden="true"><path d="M0 5h9L4.500 0z" fill="#999" /></svg></span></th>
                      <th className="border-r border-[#e2e2e2] px-[5px] font-normal">大小</th>
                      <th className="px-[5px] font-normal">注释</th>
                    </tr>
                  </thead>
                  <tbody className="text-[15px]">
                    <tr className="h-[22px] font-bold">
                      <td className="pl-[5px]"><span className="flex items-center gap-[2px]"><BookIcon />Book1</span></td>
                      <td className="px-[6px]">12KB</td>
                      <td />
                    </tr>
                  </tbody>
                </table>
                <div className="flex flex-1"><span className="w-[119px] border-r border-[#b4d6fa]" /><span className="w-[60px] border-r border-[#b4d6fa]" /></div>
                <div className="flex h-[21px] shrink-0 items-center bg-[#f0f0f0]">
                  <button type="button" aria-label="向左" className="flex w-[22px] justify-center"><Chev d={LEFT} /></button>
                  <div className="h-[19px] w-[121px] bg-[#cdcdcd]" />
                  <span className="flex-1" />
                  <button type="button" aria-label="向右" className="flex w-6 justify-center"><Chev d={RIGHT} /></button>
                </div>
              </div>
            </aside>
            <div className="relative ml-1 min-w-0 flex-1 overflow-hidden border-2 border-t-[#707070] border-r-[#e4e2e4] border-b-[#e4e2e4] border-l-[#707070] bg-[#ababab]">
              <BookWindow />
              <a href="#feedback" className="absolute right-9 bottom-1 text-[17px] leading-7 font-light text-[#0563c1] underline">&gt;&gt;反馈</a>
            </div>
          </div>
          <div className="flex h-[29px] shrink-0">
            <Bar><Tools items={plot1} /></Bar>
            <Bar><Tools items={plot2} /></Bar>
            <Bar><Tools items={plot3} /></Bar>
            <span className="w-[299px]" />
            <Bar>
              <Tools items={rot} />
              <Combo label="角度" value="10" cls={"mr-px ml-px w-[74px] " + GREYBOX} sel={SEL} />
            </Bar>
          </div>
        </div>

        <div className="flex w-[31px] shrink-0 flex-col pl-px">
          <VBar items={right1} cls="flex w-[26px] flex-col" />
          <VBar items={right2} cls="flex w-[26px] flex-col" />
        </div>

        <aside className="relative flex w-[223px] shrink-0 flex-col">
          <PanelHead title="对象管理器" />
          <div className="h-[237px] shrink-0 border-2 border-[#787878] border-r-[#a0a0a0] bg-white pt-[3px] font-['Roboto',sans-serif] text-[14px]">
            <div className="flex h-[20px] items-center pl-[3px]">
              <svg width="12" height="12" shapeRendering="crispEdges" aria-hidden="true"><path d="M.5 .5h11v11H.5z" fill="#f4f4f4" stroke="#919191" /><path d="M3 6h6" stroke="#3050c0" strokeWidth="2" /></svg>
              <svg width="20" height="15" viewBox="0 0 20 15" className="mr-[2px] ml-[3px]" aria-hidden="true"><path d="M1 13V2h6l2 2h7v3" fill="#f8e090" stroke="#8a6a20" /><path d="M1 14L5 6h14l-4 8z" fill="#f0b840" stroke="#a07820" /></svg>
              Book1
            </div>
            <div className="flex h-[22px] items-center border border-dotted border-[#f0a060] bg-[#0078d7] text-white">
              <span className="mr-4 ml-[7px] h-3 w-[11px] self-start border-b border-l border-dotted border-[#88bbe8]" />Sheet1
            </div>
          </div>
          <div className="absolute top-[3px] right-0 h-16 w-[10px] rounded-md border-3 border-[#45505c] bg-linear-to-b from-transparent from-40% to-[#4aa0ff] to-45%" />
          <div className="h-[4px] shrink-0" />
          <PanelHead title="Apps" />
          <div className="flex min-h-0 flex-1 bg-[#f0f0f0]">
            <div className="flex w-[30px] shrink-0 flex-col pt-px">
              {["M0 .5h8M4 2l4 4H0z", "M4 1l4 4H0z", "M0 1h8L4 5z", "M0 6.500h8M0 1h8L4 5z"].map((d) => (
                <button key={d} type="button" aria-label="滚动" className="flex h-4 items-center justify-center"><svg width="8" height="7" aria-hidden="true"><path d={d} fill="#000" stroke="#000" strokeWidth=".8" /></svg></button>
              ))}
              <button type="button" className="relative flex h-[60px] items-center justify-center pl-1">
                <svg width="26" height="60" viewBox="0 0 26 60" className="absolute right-0" aria-hidden="true"><path d="M26 1L1 16v28l25 15z" fill="#fff" stroke="#555" /></svg>
                <span className={"relative font-bold " + VTEXT}>所有</span>
              </button>
              <button type="button" className="relative -mt-3 flex h-[68px] items-center justify-center pl-1">
                <svg width="26" height="68" viewBox="0 0 26 68" className="absolute right-0" aria-hidden="true"><path d="M14 1L1 8v46l25 13" fill="none" stroke="#555" /></svg>
                <span className={"relative " + VTEXT}>连接器</span>
              </button>
            </div>
            <ul className="grid flex-1 auto-rows-[94px] grid-cols-2 border border-[#a0a0a0] bg-white pt-1 pr-1 text-[15px] leading-5">
              {apps.map((a, i) => (
                <li key={i}>
                  <button type="button" className={a.dim ? "flex w-full flex-col items-center text-[#6d6d6d]" : "flex w-full flex-col items-center"}>
                    <svg width="40" height="40" viewBox="0 0 40 40" className="mb-[3px] overflow-visible" aria-hidden="true">{a.art}</svg>
                    {a.name.map((n) => <span key={n} className="whitespace-nowrap">{n}</span>)}
                  </button>
                </li>
              ))}
            </ul>
          </div>
        </aside>
      </main>

      <footer className="relative flex h-[26px] shrink-0 items-center border-t border-[#d4d4dc] bg-[#f0f0f0] text-[14px] leading-5 whitespace-nowrap">
        <svg width="40" height="40" viewBox="0 0 40 40" className="absolute bottom-0 left-0" aria-hidden="true">
          <circle cx="17" cy="24" r="15" fill="#d89484" /><path d="M5 30c8 5 16 5 24-2" stroke="#b06858" strokeWidth="3" fill="none" />
          <circle cx="19" cy="16" r="12" fill="#b4b4dc" fillOpacity=".9" stroke="#2f68e8" strokeWidth="4" />
          <path d="M12 20l4-5 4 4 6-8" stroke="#5070c0" strokeWidth="1.500" fill="none" /><path d="M28 25l9 9" stroke="#2f68e8" strokeWidth="5" strokeLinecap="round" />
        </svg>
        <span className="ml-[43px]">&lt;&lt;</span>
        <span className="ml-[6px] flex-1">【开始】菜单 (F1)</span>
        <span className="w-[176px] border-l border-[#cfcfcf] pl-2">平均值=0 求和=0 计数=0</span>
        <span className="mr-[10px] h-5 border-l border-[#cfcfcf]" />
        <span className="w-[55px] border-l border-[#cfcfcf] pl-1">AU : 开</span>
        <span className="mr-[5px] h-5 border-l border-[#cfcfcf]" />
        <span className="w-[61px] border-l border-[#cfcfcf] pl-1">(2x32) 0</span>
        <span className="w-[150px] border-l border-[#cfcfcf] pl-1 text-[13px]">12KB - [Book1]Sheet1!</span>
        <span className="w-10 border-l border-[#cfcfcf] pl-[5px]">弧度</span>
      </footer>
    </div>
  );
}
